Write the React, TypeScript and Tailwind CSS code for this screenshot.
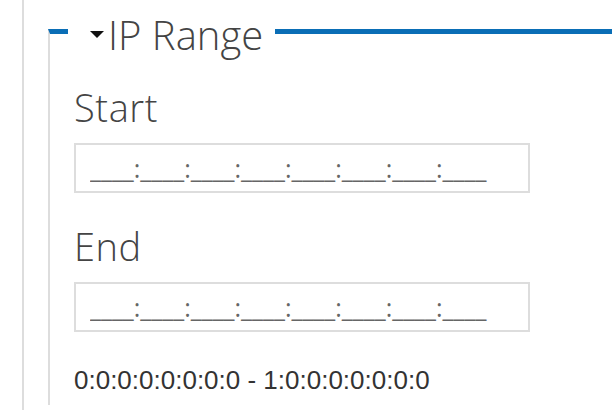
import { useState } from 'react';

function Caret({ open }: { open: boolean }) {
  return (
    <svg width="14" height="7" viewBox="0 0 14 7" className={open ? '' : '-rotate-90'}>
      <path d="M0 0H14L7 7Z" fill="#111" />
    </svg>
  );
}

function IpField({ label }: { label: string }) {
  return (
    <div className="flex flex-col">
      <label className="font-['Open_Sans',sans-serif] font-light text-[38px] tracking-[0.6px] leading-[40px] text-[#444] mb-[16px]">{label}</label>
      <input
        type="text"
        placeholder="____:____:____:____:____:____:____:____"
        className="w-[456px] h-[50px] border-2 border-[#ddd] pl-[14px] font-['Open_Sans',sans-serif] text-[25px] text-[#333] placeholder:text-[#666] outline-none"
      />
    </div>
  );
}

export default function App() {
  const [open, setOpen] = useState(true);

  return (
    <div className="min-h-screen bg-white pl-[22px]">
      <div className="min-h-[410px] border-l-2 border-[#ddd] pl-[24px] pt-[29px]">
        <div className="border-t-[5px] border-l-2 border-t-[#0a6eb6] border-l-[#ddd] min-h-[376px]">
          <button
            onClick={() => setOpen(!open)}
            className="-mt-[19px] ml-[18px] flex items-center bg-white pl-[22px] pr-[12px] h-[40px]"
          >
            <span className="-mt-[1px]"><Caret open={open} /></span>
            <span className="ml-[4px] font-['Open_Sans',sans-serif] font-light text-[40px] leading-[40px] text-[#444]">IP Range</span>
          </button>

          {open && (
            <div className="pl-[24px] pt-[32px] flex flex-col">
              <IpField label="Start" />
              <div className="mt-[33px]">
                <IpField label="End" />
              </div>
              <p className="mt-[29px] font-['Liberation_Sans',Arial,sans-serif] text-[26px] text-[#333]">
                0:0:0:0:0:0:0:0 - 1:0:0:0:0:0:0:0
              </p>
            </div>
          )}
        </div>
      </div>
    </div>
  );
}
